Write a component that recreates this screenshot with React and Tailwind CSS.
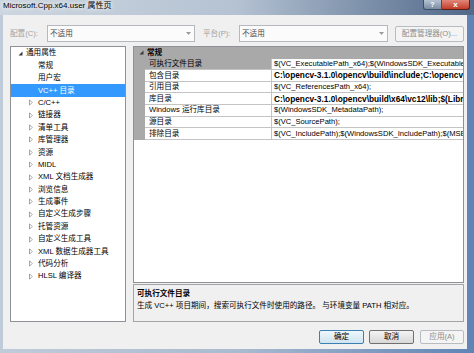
import React from "react";

const font = "font-['Liberation_Sans','Noto_Sans_CJK_SC',sans-serif]";

const Arrow = ({ open }) =>
  open ? (
    <svg width="5" height="5" viewBox="0 0 5 5">
      <path d="M4.5 0.5V4.5H0.5Z" fill="#3a3a3a" />
    </svg>
  ) : (
    <svg width="4" height="7" viewBox="0 0 4 7">
      <path d="M0.5 0.8L3.2 3.5L0.5 6.2Z" fill="none" stroke="#9a9a9a" strokeWidth="0.9" />
    </svg>
  );

const treeItems = [
  { t: "通用属性", lvl: 0 },
  { t: "常规" },
  { t: "用户宏" },
  { t: "VC++ 目录", sel: true },
  { t: "C/C++", arrow: true },
  { t: "链接器", arrow: true },
  { t: "清单工具", arrow: true },
  { t: "库管理器", arrow: true },
  { t: "资源", arrow: true },
  { t: "MIDL", arrow: true },
  { t: "XML 文档生成器", arrow: true },
  { t: "浏览信息", arrow: true },
  { t: "生成事件", arrow: true },
  { t: "自定义生成步骤", arrow: true },
  { t: "托管资源", arrow: true },
  { t: "自定义生成工具", arrow: true },
  { t: "XML 数据生成器工具", arrow: true },
  { t: "代码分析", arrow: true },
  { t: "HLSL 编译器", arrow: true },
];

const rows = [
  {
    name: "可执行文件目录",
    value: "$(VC_ExecutablePath_x64);$(WindowsSDK_ExecutablePath);$(VS_ExecutablePath);$(MSBuild_ExecutablePath);$(PATH);",
    sel: true,
  },
  {
    name: "包含目录",
    value: "C:\\opencv-3.1.0\\opencv\\build\\include;C:\\opencv-3.1.0\\opencv\\build\\include\\opencv;$(IncludePath)",
    bold: true,
  },
  { name: "引用目录", value: "$(VC_ReferencesPath_x64);" },
  {
    name: "库目录",
    value: "C:\\opencv-3.1.0\\opencv\\build\\x64\\vc12\\lib;$(LibraryPath)",
    bold: true,
  },
  { name: "Windows 运行库目录", value: "$(WindowsSDK_MetadataPath);" },
  { name: "源目录", value: "$(VC_SourcePath);" },
  { name: "排除目录", value: "$(VC_IncludePath);$(WindowsSDK_IncludePath);$(MSBuild_ExecutablePath);" },
];

const Combo = ({ w, text }) => (
  <div className={`${w} shrink-0 h-[17px] flex items-center border border-[#b5b8bd] bg-[#fbfbfb] pl-[2px] pr-[3px]`}>
    <span className="flex-1 text-[#4a4a4a]">{text}</span>
    <svg width="5" height="3" viewBox="0 0 5 3">
      <path d="M0 0H5L2.5 3Z" fill="#9a9a9a" />
    </svg>
  </div>
);

export default function App() {
  return (
    <div
      className={`${font} text-[7.6px] leading-none w-[474px] h-[353px] overflow-hidden flex flex-col bg-gradient-to-r from-[#bfcbd9] via-[#a9bbd0] to-[#5f84b4] text-black`}
    >
      {/* title bar */}
      <div className="h-[15px] shrink-0 flex items-start bg-gradient-to-r from-[#cdd6e0] via-[#b4c2d2] to-[#52698a]">
        <span className="ml-[3px] mt-[2px] text-[8px] [text-shadow:0_0_4px_#fff,0_0_6px_#fff]">
          Microsoft.Cpp.x64.user 属性页
        </span>
        <div className="ml-auto mr-[4px] flex">
          <div className="w-[19px] h-[10px] rounded-bl-[3px] border border-t-0 border-[#3c4f66] bg-gradient-to-b from-[#b5c2d1] to-[#7a8ca4] text-white text-[7px] flex items-center justify-center font-bold">
            ?
          </div>
          <div className="w-[28px] h-[10px] rounded-br-[3px] border border-t-0 border-l-0 border-[#5a1f1a] bg-gradient-to-b from-[#e0877a] to-[#c23a26] text-white text-[8px] flex items-center justify-center font-bold">
            x
          </div>
        </div>
      </div>

      {/* client */}
      <div className="flex-1 min-h-0 flex pl-[3px] pr-[7px] pb-[4px]">
        <div className="flex-1 min-w-0 overflow-hidden bg-[#f0f0f0] flex flex-col pt-[10px] pl-[7px] pr-[3px]">
          {/* config row */}
          <div className="h-[17px] flex items-center">
            <span className="w-[37px] shrink-0 text-[#a3a3a3]">配置(C):</span>
            <Combo w="w-[148px]" text="不适用" />
            <span className="ml-[8px] w-[36px] shrink-0 text-[#a3a3a3]">平台(P):</span>
            <Combo w="w-[149px]" text="不适用" />
            <div className="ml-[7px] w-[69px] shrink-0 h-[16px] rounded-[2px] border border-[#b8bcc0] bg-[#f4f4f4] text-[#8c8c8c] flex items-center justify-center whitespace-nowrap">
              配置管理器(O)...
            </div>
          </div>

          {/* main */}
          <div className="mt-[4px] h-[276px] flex gap-[7px] min-w-0">
            <div className="w-[116px] shrink-0 border border-[#8e9297] bg-white overflow-hidden">
              {treeItems.map((it) => (
                <div
                  key={it.t}
                  className={`h-[12.4px] flex items-center whitespace-nowrap ${
                    it.sel ? "bg-[#3399ff] text-white" : ""
                  } ${it.lvl === 0 ? "pl-[7px]" : it.arrow ? "pl-[18px]" : "pl-[27px]"}`}
                >
                  {it.lvl === 0 && (
                    <span className="w-[8px] flex">
                      <Arrow open />
                    </span>
                  )}
                  {it.arrow && (
                    <span className="w-[9px] flex">
                      <Arrow />
                    </span>
                  )}
                  <span>{it.t}</span>
                </div>
              ))}
            </div>

            <div className="flex-1 flex flex-col gap-[1px] min-w-0">
              {/* property grid */}
              <div className="h-[237px] border border-[#8e9297] bg-white flex flex-col overflow-hidden">
                <div className="h-[11.6px] bg-[#a9a9a9] flex items-center pl-[5px] font-bold">
                  <span className="w-[8px] flex">
                    <Arrow open />
                  </span>
                  常规
                </div>
                {rows.map((r) => (
                  <div key={r.name} className="h-[11.6px] flex min-w-0">
                    <div className="w-[11px] shrink-0 bg-[#a9a9a9]" />
                    <div
                      className={`w-[127px] shrink-0 flex items-center pl-[4px] border-b border-r border-[#c4c4c4] whitespace-nowrap ${
                        r.sel ? "bg-[#a9a9a9]" : "bg-white"
                      }`}
                    >
                      {r.name}
                    </div>
                    <div
                      className={`flex-1 min-w-0 flex items-center pl-[2px] border-b border-[#c4c4c4] whitespace-nowrap overflow-hidden ${
                        r.bold ? "font-bold text-[8.3px]" : ""
                      }`}
                    >
                      {r.value}
                    </div>
                  </div>
                ))}
              </div>

              {/* description */}
              <div className="h-[38px] border border-[#a4a4a4] bg-[#f0f0f0] pl-[3px] pt-[5px] flex flex-col gap-[4px]">
                <span className="font-bold">可执行文件目录</span>
                <span>生成 VC++ 项目期间，搜索可执行文件时使用的路径。 与环境变量 PATH 相对应。</span>
              </div>
            </div>
          </div>

          {/* buttons */}
          <div className="mt-[8px] h-[14px] flex justify-end">
            <div className="w-[45px] h-[14px] rounded-[2px] border border-[#3c7fb1] bg-gradient-to-b from-[#eef7fc] to-[#cfe4f1] flex items-center justify-center">
              确定
            </div>
            <div className="ml-[5px] w-[45px] h-[14px] rounded-[2px] border border-[#707070] bg-gradient-to-b from-[#f3f3f3] to-[#d8d8d8] flex items-center justify-center">
              取消
            </div>
            <div className="ml-[6px] w-[44px] h-[14px] rounded-[2px] border border-[#b8bcc0] bg-[#f4f4f4] text-[#8c8c8c] flex items-center justify-center">
              应用(A)
            </div>
          </div>
        </div>
      </div>
    </div>
  );
}
